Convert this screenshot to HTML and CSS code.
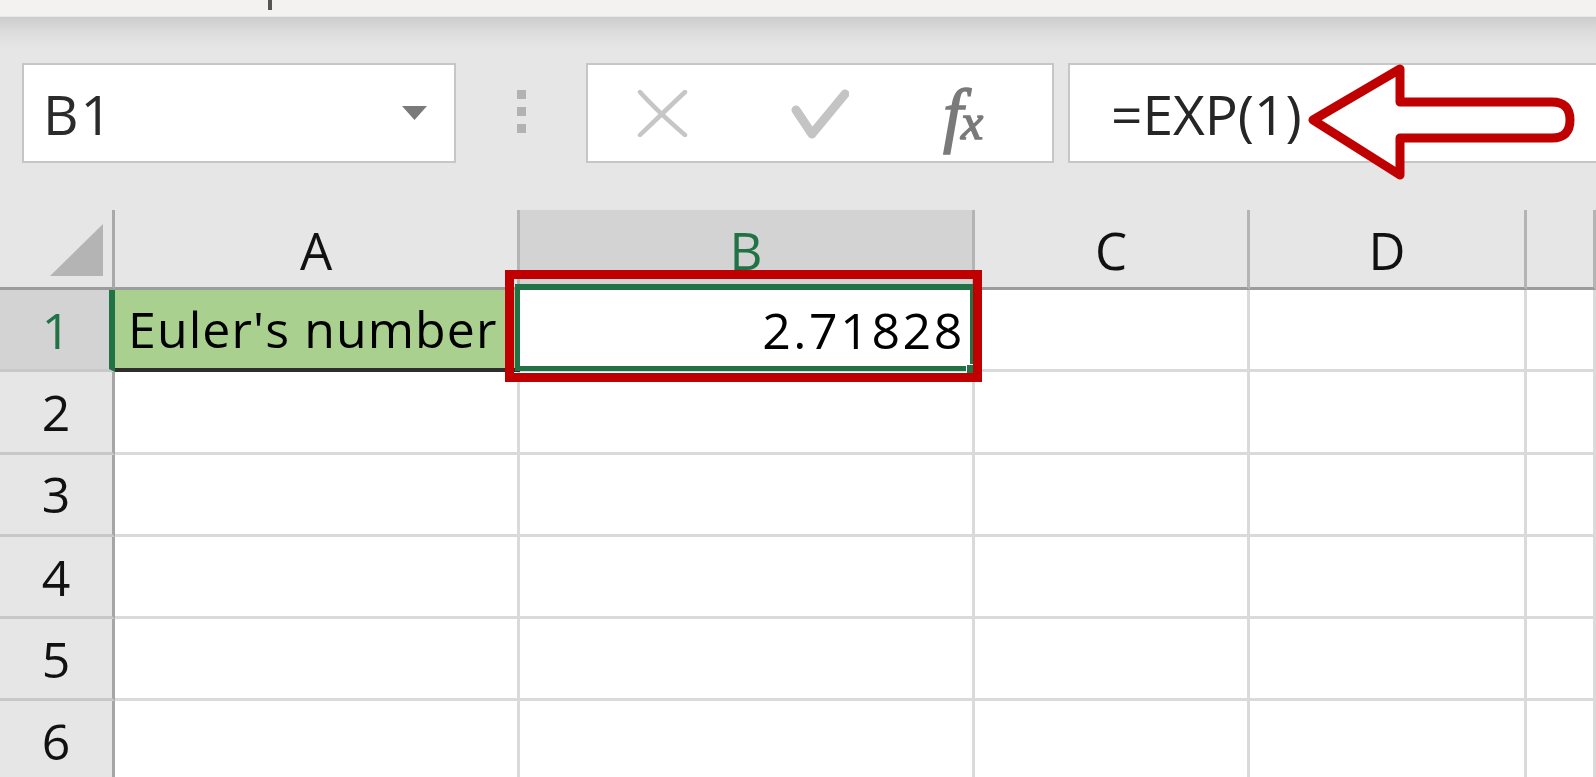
FILE: index.html
```html
<!DOCTYPE html>
<html lang="en">
<head>
    <meta charset="UTF-8">
    <meta name="viewport" content="width=device-width, initial-scale=1.0">
    <title>EXP function</title>
    <link rel="stylesheet" href="styles.css">
</head>
<body>
    <div class="titlebar"><span class="tick"></span></div>

    <div class="toolbar">
        <div class="namebox">
            <span class="name">B1</span>
            <svg class="caret" width="25" height="14" viewBox="0 0 25 14"><path d="M0 0H25L12.5 14Z" fill="#7a7a7a"/></svg>
        </div>
        <div class="grip"><i></i><i></i><i></i></div>
        <div class="fbuttons">
            <svg class="icon-x" width="53" height="47" viewBox="0 0 53 47">
                <path d="M4 2Q20 20 49 45M49 2Q30 20 4 45" fill="none" stroke="#c6c6c6" stroke-width="4.5" stroke-linecap="round"/>
            </svg>
            <svg class="icon-check" width="58" height="52" viewBox="0 0 58 52">
                <path d="M5 22L21 46L54 6" fill="none" stroke="#c4c4c4" stroke-width="9" stroke-linejoin="round" stroke-linecap="round"/>
            </svg>
            <span class="fx"><span class="f">f</span>x</span>
        </div>
        <div class="formula">=EXP(1)</div>

        <!-- callout arrow pointing at the formula -->
        <svg class="arrow" width="292" height="134" viewBox="0 0 292 134">
            <path d="M13 65L100 14V47H252Q270 47 270 65Q270 83 252 83H100V120Z" fill="#fff" stroke="#c00000" stroke-width="9" stroke-linejoin="round"/>
        </svg>
    </div>

    <div class="sheet">
        <div class="corner">
            <svg width="53" height="52" viewBox="0 0 53 52"><path d="M0 52L53 0V52Z" fill="#b4b4b4"/></svg>
        </div>
        <div class="colhead">A</div>
        <div class="colhead active">B</div>
        <div class="colhead">C</div>
        <div class="colhead">D</div>
        <div class="colhead"></div>

        <div class="rowhead active">1</div>
        <div class="cell label">Euler's number</div>
        <div class="cell number selected">2.71828</div>
        <div class="cell"></div>
        <div class="cell"></div>
        <div class="cell"></div>

        <div class="rowhead">2</div>
        <div class="cell"></div><div class="cell"></div><div class="cell"></div><div class="cell"></div><div class="cell"></div>

        <div class="rowhead">3</div>
        <div class="cell"></div><div class="cell"></div><div class="cell"></div><div class="cell"></div><div class="cell"></div>

        <div class="rowhead">4</div>
        <div class="cell"></div><div class="cell"></div><div class="cell"></div><div class="cell"></div><div class="cell"></div>

        <div class="rowhead">5</div>
        <div class="cell"></div><div class="cell"></div><div class="cell"></div><div class="cell"></div><div class="cell"></div>

        <div class="rowhead">6</div>
        <div class="cell"></div><div class="cell"></div><div class="cell"></div><div class="cell"></div><div class="cell"></div>
    </div>

    <!-- red highlight box round B1 -->
    <div class="callout"></div>
</body>
</html>
```

FILE: styles.css
```css
* {
    margin: 0;
    padding: 0;
    box-sizing: border-box;
}

html, body {
    height: 100%;
    overflow: hidden;
}

body {
    background: #e6e6e6;
    font-family: "Open Sans", sans-serif;
    color: #000;
    position: relative;
}

/* strip of the ribbon above */
.titlebar {
    height: 17px;
    background: #f3f2f0;
    border-bottom: 1px solid #e9e8e6;
    position: relative;
}

.tick {
    position: absolute;
    left: 268px;
    top: 0;
    width: 4px;
    height: 10px;
    background: #555;
}

/* formula bar row */
.toolbar {
    height: 193px;
    background: linear-gradient(#cdcdcd 0, #dddddd 16px, #e6e6e6 32px);
    display: flex;
    align-items: flex-start;
    padding: 46px 0 0 22px;
    position: relative;
}

.namebox {
    width: 434px;
    height: 100px;
    background: #fff;
    border: 2px solid #c6c6c6;
    display: flex;
    align-items: center;
    justify-content: space-between;
    padding: 0 27px 0 19px;
}

.name {
    font-size: 55px;
    color: #2b2b2b;
    letter-spacing: 2px;
}

.grip {
    display: flex;
    flex-direction: column;
    gap: 8px;
    margin: 27px 60px 0 61px;
}

.grip i {
    display: block;
    width: 9px;
    height: 9px;
    background: #b2b2b2;
}

.fbuttons {
    width: 468px;
    height: 100px;
    background: #fff;
    border: 2px solid #c6c6c6;
    display: flex;
    align-items: center;
    padding: 0 0 0 48px;
}

.icon-check {
    margin-left: 102px;
    margin-top: 2px;
}

.fx {
    margin-left: 94px;
    font-family: "Liberation Serif", serif;
    font-style: italic;
    font-size: 50px;
    color: #7a7a7a;
    -webkit-text-stroke: 1.5px #7a7a7a;
    margin-top: 4px;
}

.fx .f {
    font-size: 72px;
    line-height: 1;
    margin-right: -2px;
}

.formula {
    flex: 1;
    height: 100px;
    margin-left: 14px;
    margin-right: -10px;
    background: #fff;
    border: 2px solid #c6c6c6;
    font-size: 55px;
    color: #262626;
    display: flex;
    align-items: center;
    padding-left: 41px;
}

.arrow {
    position: absolute;
    left: 1300px;
    top: 38px;
}

/* worksheet grid */
.sheet {
    display: grid;
    grid-template-columns: 115px 405px 455px 275px 277px 1fr;
    grid-template-rows: 80px repeat(6, 82.3px);
}

.corner {
    border-right: 3px solid #a9a9a9;
    border-bottom: 3px solid #9c9c9c;
    display: flex;
    align-items: flex-end;
    justify-content: flex-end;
    padding: 0 9px 11px 0;
}

.colhead {
    background: #e6e6e6;
    border-right: 3px solid #b4b4b4;
    border-bottom: 3px solid #9c9c9c;
    font-size: 51px;
    display: flex;
    align-items: center;
    justify-content: center;
    padding-top: 2px;
    color: #111;
}

.colhead.active {
    background: #d3d3d3;
    color: #217346;
    border-bottom-color: #217346;
}

.rowhead {
    background: #e6e6e6;
    border-right: 3px solid #a6a6a6;
    border-bottom: 3px solid #c8c8c8;
    font-size: 50px;
    display: flex;
    align-items: center;
    justify-content: center;
    color: #111;
}

.rowhead.active {
    background: #d3d3d3;
    color: #217346;
    border-right: 6px solid #217346;
    padding-left: 3px;
}

.cell {
    background: #fff;
    border-right: 3px solid #dadada;
    border-bottom: 3px solid #dadada;
    font-size: 50px;
    display: flex;
    align-items: center;
    padding: 0 9px 0 13px;
    white-space: nowrap;
}

.cell.label {
    background: #a9d08e;
    border-bottom: 4px solid #2e2e2e;
    border-right: none;
    letter-spacing: 1.1px;
}

.cell.number {
    justify-content: flex-end;
    letter-spacing: 2.6px;
    padding-right: 7px;
}

.cell.selected {
    position: relative;
}

/* active cell border with fill handle */
.cell.selected::before {
    content: "";
    position: absolute;
    left: -5px;
    top: -6px;
    right: -3px;
    bottom: -2px;
    border: 5px solid #217346;
}

.cell.selected::after {
    content: "";
    position: absolute;
    right: -6px;
    bottom: -7px;
    width: 10px;
    height: 10px;
    background: #217346;
    border: 1px solid #fff;
}

.callout {
    position: absolute;
    left: 505px;
    top: 270px;
    width: 477px;
    height: 112px;
    border: 9px solid #c00000;
}
```
